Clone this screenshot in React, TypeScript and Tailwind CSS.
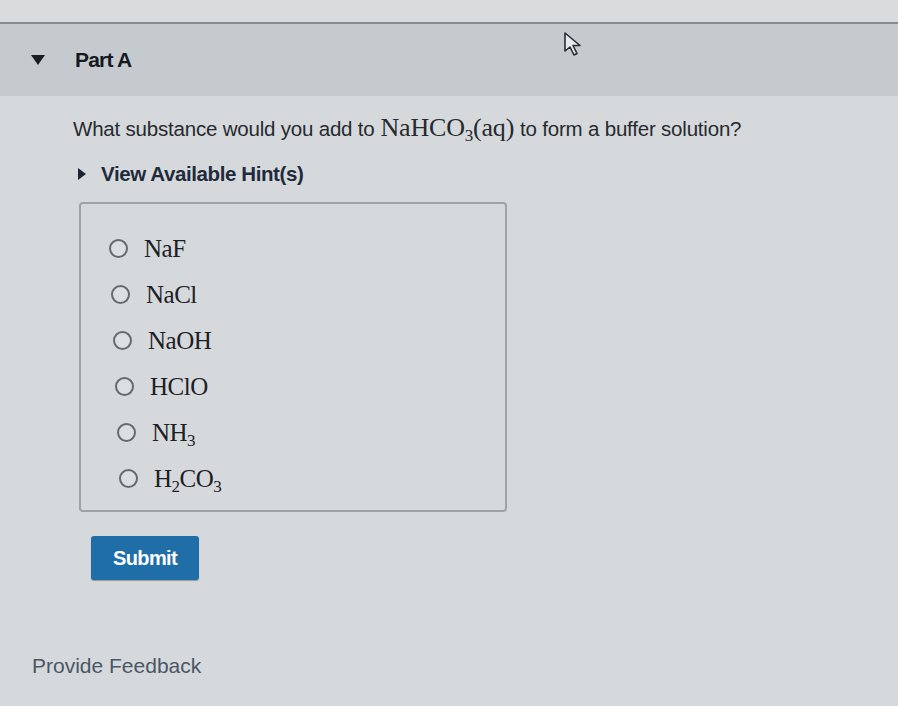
import React from "react";

const serif = { fontFamily: '"Liberation Serif", "DejaVu Serif", serif' };
const sub = "text-[17px] relative top-[5px] align-baseline";

const options: React.ReactNode[] = [
  "NaF",
  "NaCl",
  "NaOH",
  "HClO",
  <>
    NH<span className={sub}>3</span>
  </>,
  <>
    H<span className={sub}>2</span>CO<span className={sub}>3</span>
  </>,
];

export default function App() {
  return (
    <div
      className="relative w-[898px] h-[706px] overflow-hidden bg-[#d6d9db] text-[#222]"
      style={{ fontFamily: '"Liberation Sans", Arial, sans-serif' }}
    >
      {/* top strip */}
      <div className="h-[22px] bg-[#d9dbdc]" />

      {/* Part header */}
      <div className="h-[74px] bg-[#c5cacf] border-t-2 border-[#868b90] flex items-center pl-[30px]">
        <svg width="16" height="12" viewBox="0 0 16 12" className="mr-[29px]">
          <path d="M1 1h14L8 11z" fill="#1a1d22" />
        </svg>
        <span className="text-[21px] font-bold tracking-[-0.8px] text-[#15191f]">Part A</span>
      </div>

      {/* cursor */}
      <svg className="absolute left-[563px] top-[31px]" width="22" height="26" viewBox="0 0 22 26">
        <path d="M2 2v18l5-4 4 8 3-1.5-4-8h7z" fill="#e8eaec" stroke="#2a2e33" strokeWidth="1.6" strokeLinejoin="round" />
      </svg>

      <div className="pl-[73px] pt-[12px]">
        <p className="text-[20.5px] tracking-[-0.2px] text-[#262a2f] flex items-baseline">
          What substance would you add to
          <span className="ml-[6px] mr-[6px] text-[26px]" style={serif}>
            NaHCO<span className={sub}>3</span>(aq)
          </span>
          to form a buffer solution?
        </p>

        <div className="mt-[12px] flex items-center">
          <svg width="10" height="14" viewBox="0 0 10 14" className="ml-[4px] mr-[14px]">
            <path d="M1 1l8 6-8 6z" fill="#1b2533" />
          </svg>
          <span className="text-[20.5px] font-bold tracking-[-0.4px] text-[#1f2b3b]">View Available Hint(s)</span>
        </div>

        <div className="mt-[12px] ml-[6px] w-[428px] h-[310px] border-2 border-[#9ea3a8] rounded-[4px] pt-[31px] pl-[28px] flex flex-col gap-[18px]">
          {options.map((o, i) => (
            <label key={i} className="flex items-center h-[28px]" style={{ marginLeft: i * 2 }}>
              <span className="w-[19px] h-[19px] rounded-full border-2 border-[#656a70] bg-[#dcdfe1] mr-[16px]" />
              <span className="text-[25px] text-[#1d2025] tracking-[-0.5px]" style={serif}>
                {o}
              </span>
            </label>
          ))}
        </div>

        <button className="mt-[24px] ml-[18px] w-[108px] h-[44px] rounded-[3px] bg-[#1f6ea8] text-white text-[20px] font-bold tracking-[-0.6px] shadow-[0_1px_1px_rgba(0,0,0,0.3)]">
          Submit
        </button>
      </div>

      <div className="pl-[32px] mt-[70px] text-[21px] text-[#4a5766]">Provide Feedback</div>
    </div>
  );
}
